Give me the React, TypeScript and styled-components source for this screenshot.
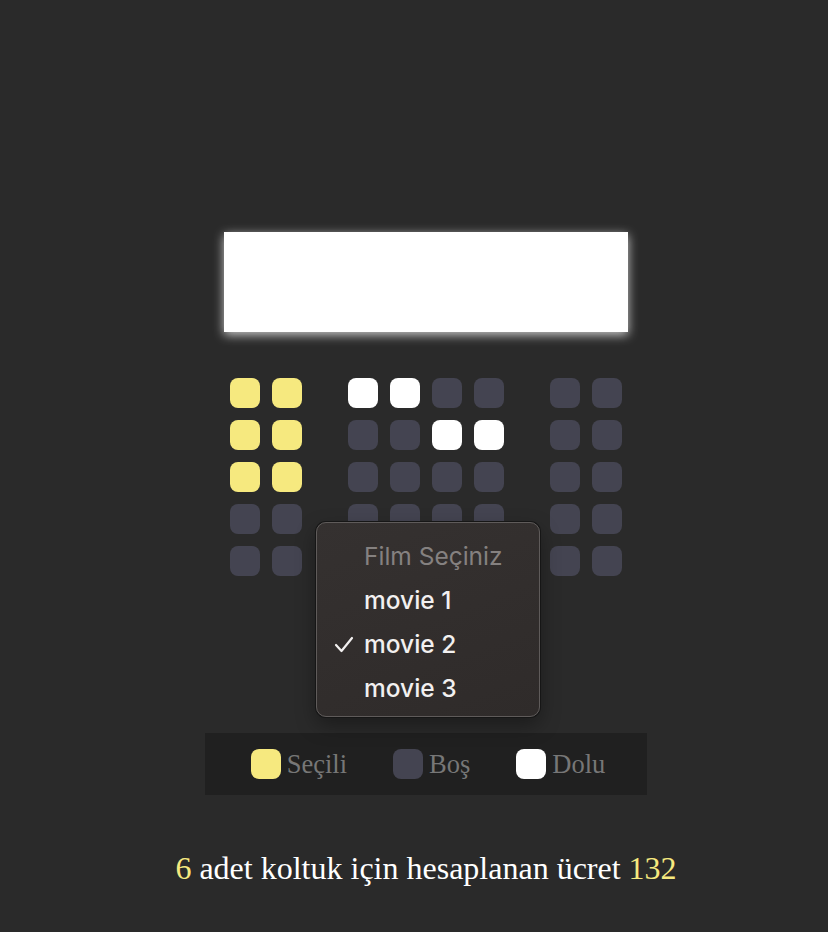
import React from 'react';
import styled, { createGlobalStyle } from 'styled-components';

type SeatState = 'empty' | 'selected' | 'occupied';

const GlobalStyle = createGlobalStyle`
  * { box-sizing: border-box; }
  html, body {
    margin: 0;
    padding: 0;
    background: #2a2a2a;
  }
  body {
    font-family: "Liberation Serif", "Times New Roman", serif;
    color: #fff;
  }
`;

const Page = styled.div`
  min-height: 932px;
  display: flex;
  flex-direction: column;
  align-items: center;
  padding-top: 232px;
  padding-left: 24px;
`;

const Container = styled.div`
  width: 404px;
  display: flex;
  flex-direction: column;
  align-items: center;
`;

const Screen = styled.div`
  width: 404px;
  height: 100px;
  background: #fff;
  box-shadow: 0 3px 10px rgba(255, 255, 255, 0.75);
  margin-bottom: 40px;
`;

const Row = styled.div`
  display: flex;
  width: 404px;
`;

const seatColor: Record<SeatState, string> = {
  empty: '#444451',
  selected: '#f6e97f',
  occupied: '#ffffff',
};

const Seat = styled.div<{ $state: SeatState }>`
  width: 30px;
  height: 30px;
  margin: 6px;
  border-radius: 8px;
  background: ${(p) => seatColor[p.$state]};

  &:nth-of-type(2) {
    margin-right: 40px;
  }
  &:nth-last-of-type(2) {
    margin-left: 40px;
  }
`;

const SelectArea = styled.div`
  position: relative;
  width: 404px;
  height: 151px;
`;

const Popup = styled.ul`
  position: absolute;
  left: 92px;
  top: -60px;
  width: 224px;
  height: 195px;
  margin: 0;
  padding: 11px 0 0;
  list-style: none;
  border-radius: 10px;
  background: linear-gradient(160deg, #353130 0%, #2f2b2a 100%);
  border: 1px solid #5f5b5a;
  box-shadow: 0 0 0 1px #161616, 0 8px 20px rgba(0, 0, 0, 0.35);
  font-family: Inter, "Noto Sans", sans-serif;
  font-size: 24.5px;
  z-index: 5;
`;

const Option = styled.li<{ $muted?: boolean }>`
  position: relative;
  height: 44px;
  line-height: 44px;
  padding-left: 47px;
  color: ${(p) => (p.$muted ? '#858180' : '#f2f0f0')};
  font-weight: ${(p) => (p.$muted ? 400 : 500)};
`;

const Check = styled.svg`
  position: absolute;
  left: 17px;
  top: 14px;
  width: 20px;
  height: 17px;
`;

const Showcase = styled.ul`
  display: flex;
  align-items: center;
  justify-content: center;
  width: 442px;
  height: 62px;
  margin: 0;
  padding: 0 0 0 4px;
  list-style: none;
  background: rgba(0, 0, 0, 0.22);
  color: #777;
  font-size: 26.5px;
`;

const ShowcaseItem = styled.li`
  display: flex;
  align-items: center;
  margin: 0 23px;
`;

const LegendSeat = styled.div<{ $state: SeatState }>`
  width: 30px;
  height: 30px;
  border-radius: 8px;
  margin-right: 6px;
  background: ${(p) => seatColor[p.$state]};
`;

const Summary = styled.p`
  margin: 55px 0 0;
  font-size: 32px;
  color: #fff;
`;

const Highlight = styled.span`
  color: #f6e97f;
`;

const layout: SeatState[][] = [
  ['selected', 'selected', 'occupied', 'occupied', 'empty', 'empty', 'empty', 'empty'],
  ['selected', 'selected', 'empty', 'empty', 'occupied', 'occupied', 'empty', 'empty'],
  ['selected', 'selected', 'empty', 'empty', 'empty', 'empty', 'empty', 'empty'],
  ['empty', 'empty', 'empty', 'empty', 'empty', 'empty', 'empty', 'empty'],
  ['empty', 'empty', 'empty', 'empty', 'empty', 'empty', 'empty', 'empty'],
];

const movies = ['movie 1', 'movie 2', 'movie 3'];

export default function App() {
  const selectedCount = layout.flat().filter((s) => s === 'selected').length;

  return (
    <>
      <GlobalStyle />
      <Page>
        <Container>
          <Screen />
          {layout.map((row, r) => (
            <Row key={r}>
              {row.map((state, c) => (
                <Seat key={c} $state={state} />
              ))}
            </Row>
          ))}
          <SelectArea>
            <Popup>
              <Option $muted>Film Seçiniz</Option>
              {movies.map((m) => (
                <Option key={m}>
                  {m === 'movie 2' && (
                    <Check viewBox="0 0 20 17">
                      <path
                        d="M2 9 L7.5 15 L18 2"
                        fill="none"
                        stroke="#f2f0f0"
                        strokeWidth="2.2"
                        strokeLinecap="round"
                        strokeLinejoin="round"
                      />
                    </Check>
                  )}
                  {m}
                </Option>
              ))}
            </Popup>
          </SelectArea>
        </Container>
        <Showcase>
          <ShowcaseItem>
            <LegendSeat $state="selected" />
            Seçili
          </ShowcaseItem>
          <ShowcaseItem>
            <LegendSeat $state="empty" />
            Boş
          </ShowcaseItem>
          <ShowcaseItem>
            <LegendSeat $state="occupied" />
            Dolu
          </ShowcaseItem>
        </Showcase>
        <Summary>
          <Highlight>{selectedCount}</Highlight> adet koltuk için hesaplanan ücret{' '}
          <Highlight>132</Highlight>
        </Summary>
      </Page>
    </>
  );
}
